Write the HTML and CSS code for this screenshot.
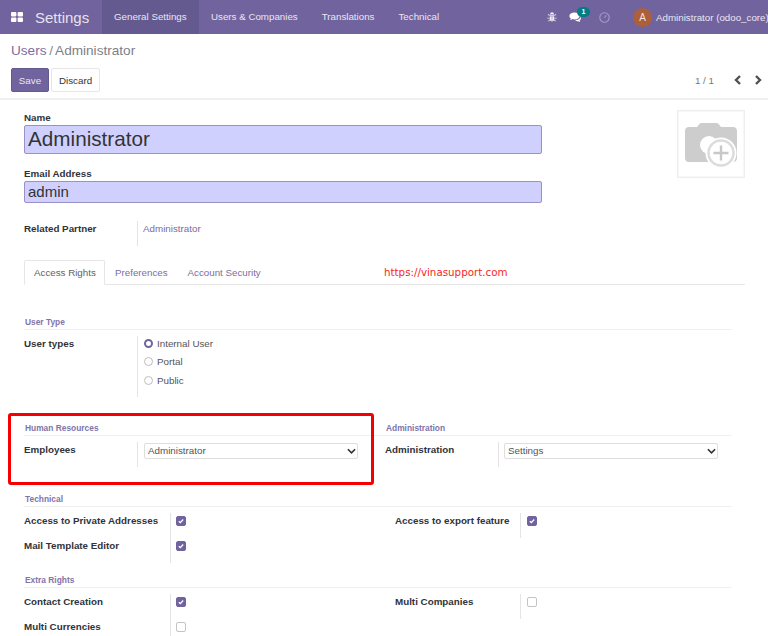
FILE: index.html
```html
<!DOCTYPE html>
<html lang="en">
<head>
<meta charset="utf-8">
<title>Settings</title>
<link rel="stylesheet" href="styles.css">
</head>
<body>
<header class="nav">
  <svg class="apps" viewBox="0 0 12 10" width="12" height="10"><rect x="0" y="0" width="5.4" height="4.4" rx="1"/><rect x="6.6" y="0" width="5.4" height="4.4" rx="1"/><rect x="0" y="5.6" width="5.4" height="4.4" rx="1"/><rect x="6.6" y="5.6" width="5.4" height="4.4" rx="1"/></svg>
  <span class="brand">Settings</span>
  <a class="nav-item active">General Settings</a>
  <a class="nav-item">Users &amp; Companies</a>
  <a class="nav-item">Translations</a>
  <a class="nav-item">Technical</a>
  <div class="systray">
    <svg class="bug" viewBox="0 0 10 10" width="10" height="10"><path d="M3 2.2a2 2 0 0 1 4 0zM2.6 2.8h4.8v1H2.6zM2.8 4.2h2v5.2c-1.2-.1-2-1-2-2.2zM5.2 4.2h2v3c0 1.2-.8 2.1-2 2.2zM.6 2.4l.6-.4 1.4 1.2-.6.5zM9.4 2.4l-.6-.4-1.4 1.2.6.5zM.4 5.7h2v.8h-2zM7.600 5.7h2v.8h-2zM1 9l1.6-1.6.4.6-1.4 1.5zM9 9 7.400 7.400l-.4.6 1.4 1.5z"/></svg>
    <span class="chat">
      <svg viewBox="0 0 13 11" width="13" height="11"><path d="M5.500 0.500C2.600 0.500.4 2 .4 4c0 1 .6 1.900 1.500 2.500-.2.7-.6 1.200-1 1.600 1 0 1.900-.4 2.600-1 .7.2 1.400.3 2 .3 2.900 0 5.100-1.500 5.100-3.400S8.400.5 5.500.5z"/><path d="M11.500 4.200c.1.900-.4 2.200-1.700 3.100-1 .7-2.300 1-3.800 1 .8.700 1.900 1 3 .9.500.4 1.300.8 2.300.8-.4-.3-.7-.800-.8-1.300.9-.5 1.400-1.300 1.400-2.100 0-1-.2-1.900-.4-2.400z"/></svg>
      <b class="badge">1</b>
    </span>
    <svg class="clock" viewBox="0 0 11 11" width="11" height="11"><circle cx="5.500" cy="5.500" r="4.700"/><path d="M5.500 5.700 7.200 3.200"/></svg>
    <span class="avatar">A</span>
    <span class="user">Administrator (odoo_core)</span>
  </div>
</header>

<section class="panel">
  <div class="crumbs"><a>Users</a> <span class="sep">/</span> Administrator</div>
  <div class="panel-row">
    <button class="btn primary">Save</button>
    <button class="btn plain">Discard</button>
    <div class="pager">
      <span>1 / 1</span>
      <svg viewBox="0 0 8 10" width="8" height="10"><path d="M6 1 2 5l4 4"/></svg>
      <svg viewBox="0 0 8 10" width="8" height="10"><path d="M2 1l4 4-4 4"/></svg>
    </div>
  </div>
</section>

<main class="sheet">
  <div class="head">
    <div class="head-fields">
      <div class="field-label">Name</div>
      <div class="input input-big">Administrator</div>
      <div class="field-label second">Email Address</div>
      <div class="input input-mid">admin</div>
    </div>
    <div class="photo">
      <svg viewBox="0 0 54 46" width="54" height="46">
        <path class="cam" d="M5 4h8l2-2.500C15.800.5 16.500 0 18 0h14c1.500 0 2.200.5 3 1.500L37 4h12c2.500 0 4 1.500 4 4v27c0 2.500-1.500 4-4 4H5c-2.500 0-4-1.500-4-4V8c0-2.500 1.500-4 4-4z"/>
        <circle cx="25" cy="22" r="9" fill="#fff"/>
        <circle cx="37" cy="30" r="15.500" fill="#fff"/>
        <circle cx="37" cy="30" r="12.500" fill="#fff" stroke="#dcdcdc" stroke-width="2.500"/>
        <path d="M37 22.500v15M29.500 30h15" stroke="#c8c8c8" stroke-width="2.400" fill="none"/>
      </svg>
    </div>
  </div>

  <div class="partner">
    <div class="row-label wide">Related Partner</div>
    <div class="row-value link">Administrator</div>
  </div>

  <nav class="tabs">
    <a class="tab current">Access Rights</a>
    <a class="tab">Preferences</a>
    <a class="tab">Account Security</a>
    <span class="stamp">https://vinasupport.com</span>
  </nav>

  <div class="content">
    <h3 class="sec first">User Type</h3>
    <div class="row tall">
      <div class="row-label wide">User types</div>
      <div class="row-value radios">
        <div class="radio on"><i></i>Internal User</div>
        <div class="radio"><i></i>Portal</div>
        <div class="radio"><i></i>Public</div>
      </div>
    </div>

    <div class="two hr-groups">
      <div>
        <h3 class="sec">Human Resources</h3>
        <div class="row single">
          <div class="row-label wide">Employees</div>
          <div class="row-value">
            <div class="select">Administrator<svg viewBox="0 0 10 6" width="9" height="6"><path d="M1 1l4 4 4-4"/></svg></div>
          </div>
        </div>
      </div>
      <div class="col-right">
        <h3 class="sec">Administration</h3>
        <div class="row single">
          <div class="row-label admin-label">Administration</div>
          <div class="row-value">
            <div class="select">Settings<svg viewBox="0 0 10 6" width="9" height="6"><path d="M1 1l4 4 4-4"/></svg></div>
          </div>
        </div>
      </div>
    </div>

    <h3 class="sec tech">Technical</h3>
    <div class="two checks">
      <div class="row-check">
        <div class="row-label narrow">Access to Private Addresses</div>
        <div class="row-value"><span class="check on"><svg viewBox="0 0 8 8" width="8" height="8"><path d="M1.800 4.300 3.300 5.600 6.200 2.500"/></svg></span></div>
        <div class="row-label narrow">Mail Template Editor</div>
        <div class="row-value"><span class="check on"><svg viewBox="0 0 8 8" width="8" height="8"><path d="M1.800 4.300 3.300 5.600 6.200 2.500"/></svg></span></div>
      </div>
      <div class="row-check right">
        <div class="row-label narrow indent">Access to export feature</div>
        <div class="row-value"><span class="check on"><svg viewBox="0 0 8 8" width="8" height="8"><path d="M1.800 4.300 3.300 5.600 6.200 2.500"/></svg></span></div>
      </div>
    </div>

    <h3 class="sec extra">Extra Rights</h3>
    <div class="two checks">
      <div class="row-check">
        <div class="row-label narrow">Contact Creation</div>
        <div class="row-value"><span class="check on"><svg viewBox="0 0 8 8" width="8" height="8"><path d="M1.800 4.300 3.300 5.600 6.200 2.500"/></svg></span></div>
        <div class="row-label narrow">Multi Currencies</div>
        <div class="row-value"><span class="check"></span></div>
      </div>
      <div class="row-check right">
        <div class="row-label narrow indent">Multi Companies</div>
        <div class="row-value"><span class="check"></span></div>
      </div>
    </div>
  </div>
  <div class="redbox"></div>
</main>
</body>
</html>
```
FILE: styles.css
```css
* { box-sizing: border-box; }
html, body { margin: 0; padding: 0; }
body {
  width: 768px;
  height: 636px;
  overflow: hidden;
  background: #fff;
  color: #4c4c4c;
  font-family: "Liberation Sans", Arial, sans-serif;
  font-size: 9.800px;
  position: relative;
}
.nav {
  height: 34px;
  background: #71639e;
  color: #fff;
  display: flex;
  align-items: center;
  padding-left: 11px;
  white-space: nowrap;
}
.apps { fill: #fff; flex: none; }
.brand { font-size: 15px; margin-left: 12px; width: 67px; color: #e6e2ef; flex: none; }
.nav-item {
  height: 34px;
  line-height: 33px;
  padding: 0 12px;
  color: #e9e6f1;
  font-size: 9.750px;
  flex: none;
}
.nav-item.active { background: #655a8f; width: 97px; }
.systray {
  position: absolute;
  left: 546px;
  top: 0;
  width: 222px;
  height: 34px;
  display: flex;
  align-items: center;
  overflow: hidden;
  padding-left: 1px;
}
.bug { fill: #f0eef5; flex: none; }
.chat { position: relative; display: block; flex: none; margin-left: 12px; height: 11px; width: 13px; fill: #fff; }
.chat svg { display: block; }
.badge {
  position: absolute;
  left: 8px;
  top: -5px;
  width: 13px;
  height: 10px;
  border-radius: 5px;
  background: #017e84;
  color: #fff;
  font-size: 7px;
  line-height: 10px;
  text-align: center;
}
.clock { margin-left: 17px; fill: none; stroke: #a49bc3; stroke-width: 1.100; flex: none; }
.avatar {
  margin-left: 23px;
  width: 19px;
  height: 19px;
  flex: none;
  border-radius: 50%;
  background: #ab5f3c;
  color: #f3e3da;
  text-align: center;
  line-height: 20px;
  font-size: 10px;
}
.user { margin-left: 4px; color: #e9e6f1; font-size: 9.750px; flex: none; }

.panel {
  height: 66px;
  border-bottom: 2px solid #f0f0f0;
  padding: 8px 6px 0 11px;
}
.crumbs { font-size: 13.600px; line-height: 18px; color: #7d7f87; word-spacing: -1px; }
.crumbs a { color: #7b6da3; }
.sep { color: #8a8a8a; }
.panel-row { display: flex; align-items: center; margin-top: 8px; height: 24px; }
.btn {
  height: 24px;
  border-radius: 2px;
  font: inherit;
  font-size: 9.800px;
  padding: 0;
}
.primary { width: 38px; background: #71639e; border: 1px solid #655a8f; color: #e9e6f1; }
.plain { width: 49px; margin-left: 2px; background: #fff; border: 1px solid #e7e7e7; color: #353535; }
.pager { margin-left: auto; display: flex; align-items: center; color: #777; font-size: 9.800px; }
.pager svg { fill: none; stroke: #4d5159; stroke-width: 2.400; margin-left: 12px; flex: none; }
.pager svg:first-of-type { margin-left: 20px; }

.sheet { position: relative; padding: 0 23px 0 24px; }
.head { display: flex; justify-content: space-between; height: 105px; }
.head-fields { width: 518px; padding-top: 11px; }
.field-label { font-size: 9.800px; font-weight: bold; line-height: 13px; color: #30333a; }
.field-label.second { margin-top: 13px; }
.input {
  background: #d0d0ff;
  border: 1px solid #9b91c4;
  border-bottom-width: 1.500px;
  border-radius: 2px;
  color: #333;
  padding-left: 3px;
  margin-top: 1px;
}
.input-big { height: 29px; font-size: 20.700px; line-height: 26px; }
.input-mid { height: 22px; font-size: 15px; line-height: 20px; }
.photo {
  width: 68px;
  height: 68px;
  margin-top: 10px;
  border: 1px solid #eee;
  box-shadow: inset 0 0 0 1px #f7f7f7;
  display: flex;
  align-items: center;
  justify-content: center;
  padding-top: 4px;
}
.cam { fill: #cdcdcd; }
.partner { display: flex; height: 25px; margin-top: 16px; }
.row-label { font-weight: bold; color: #30333a; font-size: 9.800px; line-height: 13px; padding-top: 1px; flex: none; }
.row-label.wide { width: 113px; }
.row-value { border-left: 1px solid #e4e4e4; padding-left: 6px; color: #555; font-size: 9.800px; }
.link { color: #7b6da3; padding-top: 2px; padding-left: 5px; }
.partner .row-label { padding-top: 1px; }

.tabs {
  position: relative;
  margin-top: 13px;
  height: 26px;
  border-bottom: 1px solid #e6e6e6;
  display: flex;
  align-items: flex-end;
}
.tab {
  height: 25px;
  line-height: 25px;
  padding: 0 10px;
  color: #7b6da3;
  font-size: 9.750px;
  margin-bottom: -1px;
  white-space: nowrap;
}
.tab.current { width: 81px; color: #5f6069; border: 1px solid #e6e6e6; border-bottom: 1px solid #fff; border-radius: 2px 2px 0 0; line-height: 24px; padding: 0 9px; }
.stamp {
  position: absolute;
  left: 360px;
  top: 6px;
  color: #fa1e1e;
  font-family: "DejaVu Sans", sans-serif;
  font-size: 10.300px;
  line-height: 15px;
  white-space: nowrap;
}
.content { width: 708px; }
.sec {
  margin: 0;
  height: 15px;
  line-height: 14px;
  font-size: 8.400px;
  font-weight: bold;
  color: #8075ab;
  border-bottom: 1px solid #f0f0f0;
  padding-left: 1px;
}
.sec.first { margin-top: 30px; }
.row { display: flex; margin-top: 6px; }
.row.tall { height: 61px; }
.radios { width: 200px; display: flex; flex-direction: column; gap: 4.750px; }
.radio { display: flex; align-items: center; height: 14px; color: #555; font-size: 9.800px; }
.radio i {
  width: 9px;
  height: 9px;
  border-radius: 50%;
  border: 1px solid #bdbdbd;
  margin-right: 4px;
  flex: none;
}
.radio.on i { border: 2.500px solid #71639e; background: #fff; }
.two { display: grid; grid-template-columns: 361px 347px; }
.hr-groups { margin-top: 24px; }
.row.single { height: 25px; }
.col-right .row-label { width: 113px; }
.col-right .row-value { padding-left: 5px; }
.select {
  width: 214px;
  height: 16px;
  margin-top: 1px;
  border: 1px solid #dedede;
  border-radius: 2px;
  background: #fff;
  color: #555;
  font-size: 9.800px;
  line-height: 14px;
  padding-left: 3px;
  position: relative;
}
.select svg { position: absolute; right: 1px; top: 3.500px; fill: none; stroke: #333; stroke-width: 1.800; }
.sec.tech { margin-top: 25px; }
.checks { margin-top: 6px; }
.sec.extra { margin-top: 11px; }
.row-check {
  display: grid;
  grid-template-columns: 146px 1fr;
  grid-auto-rows: 25px;
  height: 49px;
}
.row-check.right { grid-template-columns: 135px 1fr; height: 25px; }
.row-label.narrow { font-size: 9.800px; line-height: 13px; }
.row-label.indent { padding-left: 10px; }
.row-check .row-value { padding-left: 5px; padding-top: 2px; }
.row-check.right .row-value { padding-left: 6px; }
.check {
  display: block;
  width: 10px;
  height: 10px;
  border: 1px solid #c4c4c4;
  border-radius: 2px;
  margin-top: 1px;
  background: #fff;
}
.check.on { background: #71639e; border-color: #71639e; }
.check svg { display: block; fill: none; stroke: #fff; stroke-width: 1.300; }
.redbox {
  position: absolute;
  left: 8px;
  top: 313px;
  width: 366px;
  height: 72px;
  border: 3.500px solid #f50000;
  border-radius: 3px;
  pointer-events: none;
}
```
